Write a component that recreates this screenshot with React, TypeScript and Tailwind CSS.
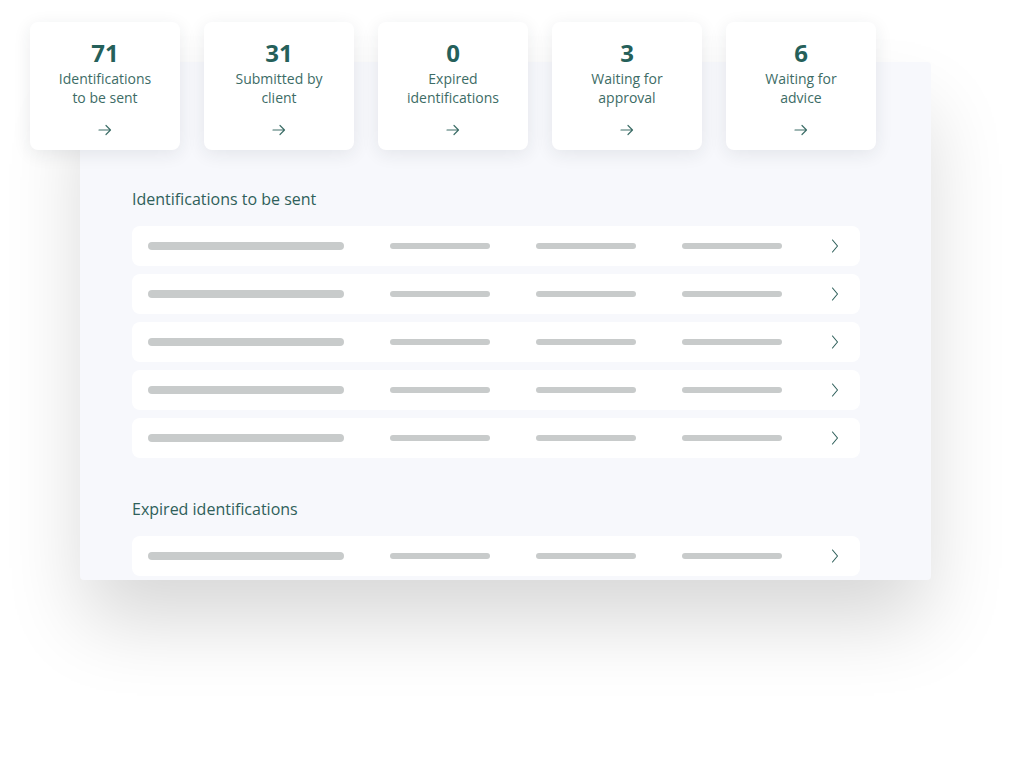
type Stat = { value: string; label: [string, string] };

const STATS: Stat[] = [
  { value: "71", label: ["Identifications", "to be sent"] },
  { value: "31", label: ["Submitted by", "client"] },
  { value: "0", label: ["Expired", "identifications"] },
  { value: "3", label: ["Waiting for", "approval"] },
  { value: "6", label: ["Waiting for", "advice"] },
];

function ArrowIcon() {
  return (
    <svg width="14" height="12" viewBox="0 0 14 12" fill="none" className="text-[#3f6f69]">
      <path d="M1 6h11.5M8 1.5 12.5 6 8 10.5" stroke="currentColor" strokeWidth="1.2" strokeLinecap="round" strokeLinejoin="round" />
    </svg>
  );
}

function Chevron() {
  return (
    <svg width="8" height="14" viewBox="0 0 8 14" fill="none" className="text-[#2e5f5a]">
      <path d="M1.5 1 6.5 7l-5 6" stroke="currentColor" strokeWidth="1.1" strokeLinecap="round" strokeLinejoin="round" />
    </svg>
  );
}

function StatCard({ stat }: { stat: Stat }) {
  return (
    <div className="relative z-10 flex h-[128px] w-[150px] flex-col items-center rounded-lg bg-white pt-[17px] shadow-[0_4px_18px_rgba(30,40,60,0.09)]">
      <span className="text-[24px] leading-[28px] font-bold text-[#25605a]">{stat.value}</span>
      <span className="mt-[2px] text-center text-[14px] leading-[19px] text-[#3d6c66]">
        {stat.label[0]}
        <br />
        {stat.label[1]}
      </span>
      <span className="mt-[17px] flex">
        <ArrowIcon />
      </span>
    </div>
  );
}

function SkeletonRow() {
  return (
    <div className="flex h-10 items-center rounded-lg bg-white pr-[21px] pl-4">
      <span className="h-2 w-[196px] rounded-full bg-[#c8cbcb]" />
      <span className="ml-[46px] h-1.5 w-[100px] rounded-full bg-[#c8cbcb]" />
      <span className="ml-[46px] h-1.5 w-[100px] rounded-full bg-[#c8cbcb]" />
      <span className="ml-[46px] h-1.5 w-[100px] rounded-full bg-[#c8cbcb]" />
      <span className="ml-auto flex">
        <Chevron />
      </span>
    </div>
  );
}

export default function App() {
  return (
    <div
      className="h-[760px] w-[1011px] overflow-hidden bg-white pt-[22px] pl-[30px]"
      style={{ fontFamily: '"Open Sans", "Noto Sans", sans-serif' }}
    >
      <div className="flex gap-6">
        {STATS.map((s) => (
          <StatCard key={s.value} stat={s} />
        ))}
      </div>

      <div className="mt-[-88px] ml-[50px] h-[518px] w-[851px] overflow-hidden rounded-sm bg-[#f7f8fc] pt-[126px] pr-[71px] pl-[52px] shadow-[0_45px_75px_-5px_rgba(0,0,0,0.16)]">
        <h2 className="text-[16px] leading-[22px] text-[#2f605a]">Identifications to be sent</h2>
        <div className="mt-[16px] flex flex-col gap-2">
          {[0, 1, 2, 3, 4].map((i) => (
            <SkeletonRow key={i} />
          ))}
        </div>

        <h2 className="mt-10 text-[16px] leading-[22px] text-[#2f605a]">Expired identifications</h2>
        <div className="mt-[16px] flex flex-col gap-2">
          <SkeletonRow />
        </div>
      </div>
    </div>
  );
}
